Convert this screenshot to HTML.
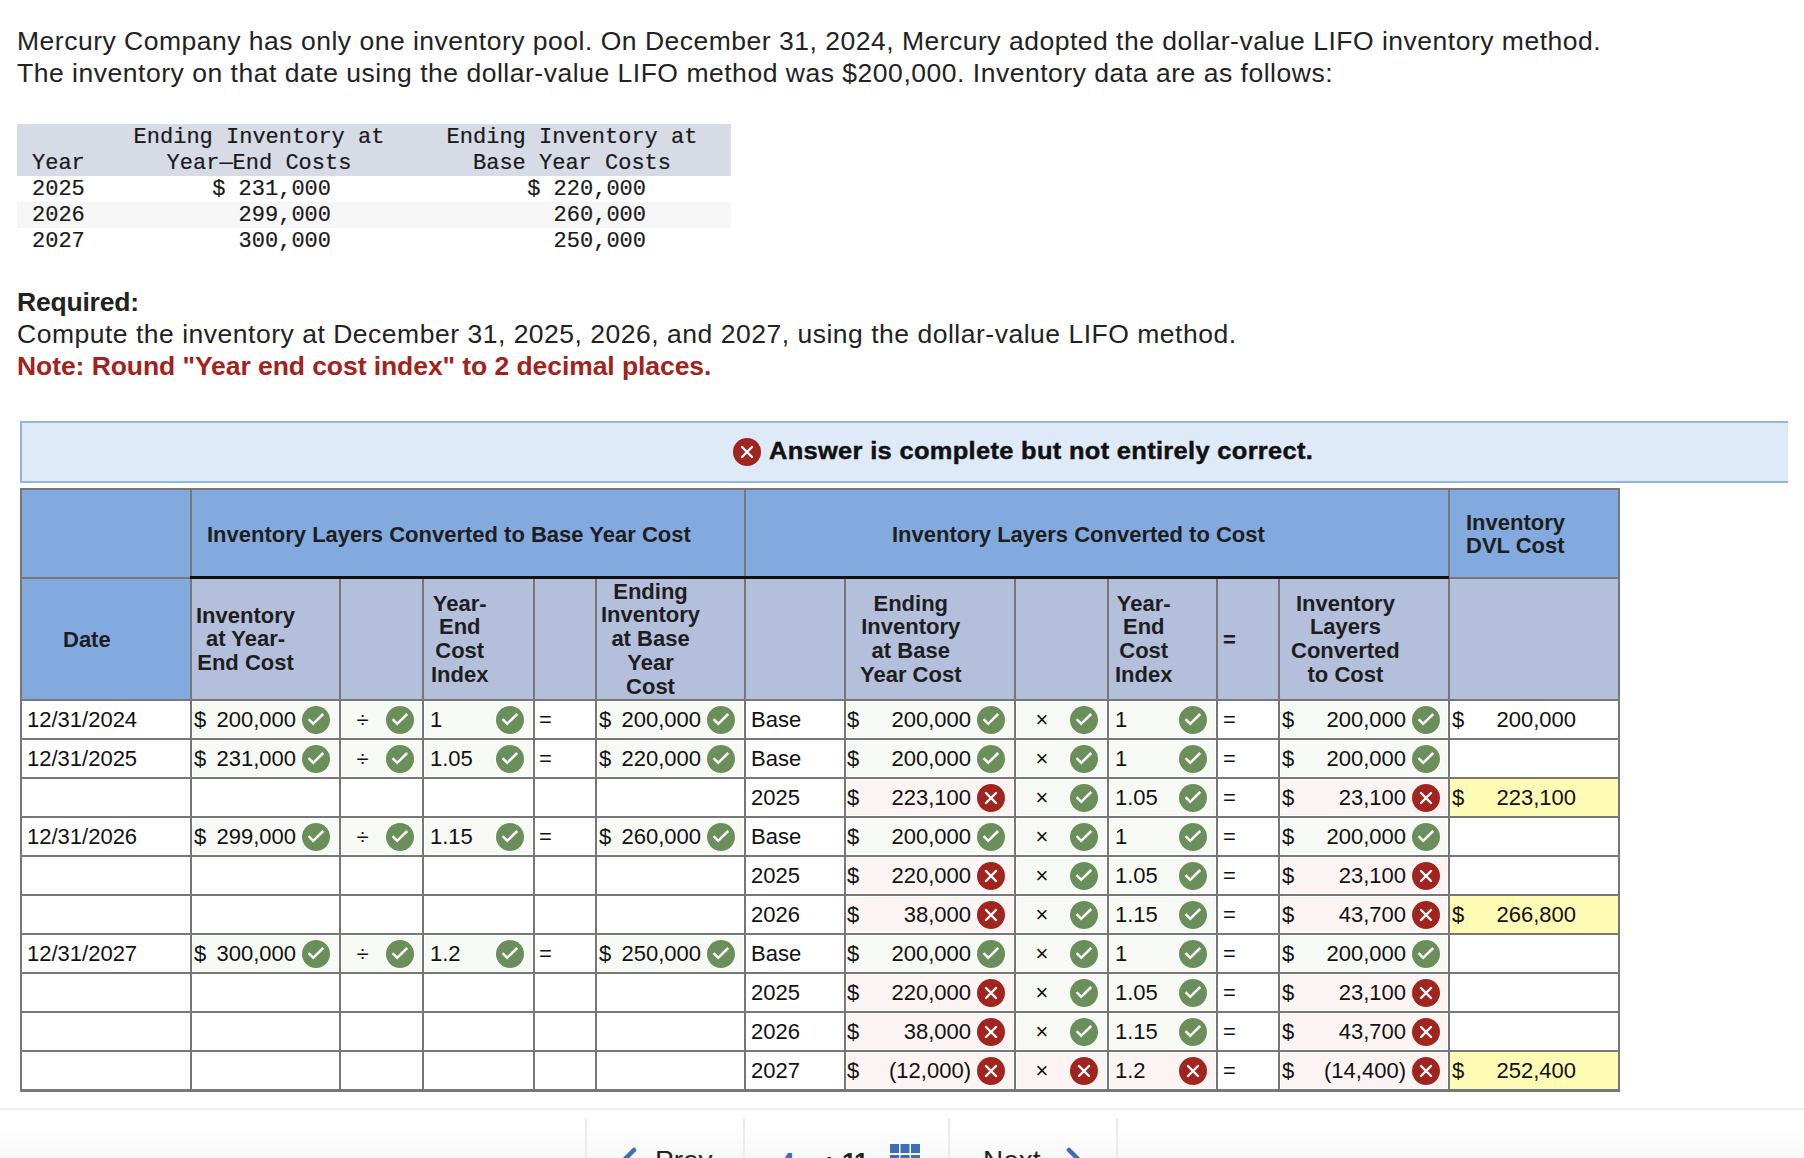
<!DOCTYPE html><html><head><meta charset="utf-8"><style>
html,body{margin:0;padding:0;background:#fff;width:1804px;height:1158px;overflow:hidden;position:relative}
*{box-sizing:border-box}
.a{position:absolute;white-space:pre}
.p{font-family:"Liberation Sans",sans-serif;font-size:26.5px;color:#222222;line-height:32px}
.m{font-family:"Liberation Mono",monospace;font-size:22px;color:#1a1a1a;line-height:26px;-webkit-text-stroke:0.2px #1a1a1a}
.t{font-family:"Liberation Sans",sans-serif;font-size:22px;color:#111111;line-height:24px}
.b{font-weight:bold}
.ln{position:absolute;background:#777777}
.ic{position:absolute;width:29px;height:29px}
</style></head><body>

<div class="a p" style="left:17px;top:25px;letter-spacing:0.5px">Mercury Company has only one inventory pool. On December 31, 2024, Mercury adopted the dollar-value LIFO inventory method.</div>
<div class="a p" style="left:17px;top:57px;letter-spacing:0.52px">The inventory on that date using the dollar-value LIFO method was $200,000. Inventory data are as follows:</div>
<div class="a" style="left:17px;top:124px;width:714px;height:52px;background:#d6dbe5"></div>
<div class="a" style="left:17px;top:202px;width:714px;height:26px;background:#f6f6f6"></div>
<div class="a m" style="left:32px;top:151px">Year</div>
<div class="a m" style="left:32px;top:177px">2025</div>
<div class="a m" style="left:32px;top:203px">2026</div>
<div class="a m" style="left:32px;top:229px">2027</div>
<div class="a m" style="left:259px;top:125px;width:0;display:flex;justify-content:center">Ending Inventory at</div>
<div class="a m" style="left:259px;top:151px;width:0;display:flex;justify-content:center">Year—End Costs</div>
<div class="a m" style="left:331px;top:177px;width:0;display:flex;justify-content:flex-end">$ 231,000</div>
<div class="a m" style="left:331px;top:203px;width:0;display:flex;justify-content:flex-end">299,000</div>
<div class="a m" style="left:331px;top:229px;width:0;display:flex;justify-content:flex-end">300,000</div>
<div class="a m" style="left:572px;top:125px;width:0;display:flex;justify-content:center">Ending Inventory at</div>
<div class="a m" style="left:572px;top:151px;width:0;display:flex;justify-content:center">Base Year Costs</div>
<div class="a m" style="left:646px;top:177px;width:0;display:flex;justify-content:flex-end">$ 220,000</div>
<div class="a m" style="left:646px;top:203px;width:0;display:flex;justify-content:flex-end">260,000</div>
<div class="a m" style="left:646px;top:229px;width:0;display:flex;justify-content:flex-end">250,000</div>
<div class="a p b" style="left:17px;top:286px;letter-spacing:-0.2px">Required:</div>
<div class="a p" style="left:17px;top:318px;letter-spacing:0.51px">Compute the inventory at December 31, 2025, 2026, and 2027, using the dollar-value LIFO method.</div>
<div class="a p b" style="left:17px;top:350px;color:#a3221c;letter-spacing:-0.07px">Note: Round "Year end cost index" to 2 decimal places.</div>
<div class="a" style="left:20px;top:421px;width:1768px;height:62px;background:#deeaf7;border-top:2px solid #93b2dc;border-bottom:2px solid #93b2dc;border-left:2px solid #93b2dc"></div>
<svg class="ic" style="left:731.9px;top:436.9px;width:30px;height:30px" viewBox="-1 -1 30 30"><circle cx="14" cy="14" r="15" fill="none"/><circle cx="14" cy="14" r="14" fill="#a2241e"/><path d="M9 9L19 19M19 9L9 19" stroke="#fff" stroke-width="2.4" stroke-linecap="round" fill="none"/></svg>
<div class="a t b" style="left:769px;top:439px;font-size:23px;letter-spacing:0.3px;color:#111;transform:scaleX(1.105);transform-origin:0 0;-webkit-text-stroke:0.45px #111">Answer is complete but not entirely correct.</div>
<div class="a" style="left:20px;top:488px;width:1600px;height:90px;background:#82aadf"></div>
<div class="a" style="left:20px;top:577px;width:1600px;height:123px;background:#b3bfdb"></div>
<div class="a" style="left:20px;top:577px;width:171px;height:123px;background:#82aadf"></div>
<div class="a t" style="left:27px;top:700px;line-height:39px;">12/31/2024</div>
<div class="a" style="left:193px;top:702px;width:145px;height:35px;background:#f7f9f4"></div>
<div class="a t" style="left:194px;top:700px;line-height:39px;">$</div>
<div class="a t" style="left:296px;top:700px;line-height:39px;width:0;display:flex;justify-content:flex-end">200,000</div>
<svg class="ic" style="left:301.3px;top:704.5px;width:30px;height:30px" viewBox="-1 -1 30 30"><circle cx="14" cy="14" r="15" fill="#fff"/><circle cx="14" cy="14" r="14" fill="#6a8f5a"/><path d="M6.6 13.2L11.2 17.8L21.2 8" stroke="#fff" stroke-width="2.5" fill="none"/></svg>
<div class="a" style="left:342px;top:702px;width:79px;height:35px;background:#f7f9f4"></div>
<div class="a t" style="left:362.5px;top:700px;line-height:39px;width:0;display:flex;justify-content:center">÷</div>
<svg class="ic" style="left:384.8px;top:704.5px;width:30px;height:30px" viewBox="-1 -1 30 30"><circle cx="14" cy="14" r="15" fill="#fff"/><circle cx="14" cy="14" r="14" fill="#6a8f5a"/><path d="M6.6 13.2L11.2 17.8L21.2 8" stroke="#fff" stroke-width="2.5" fill="none"/></svg>
<div class="a" style="left:425px;top:702px;width:107px;height:35px;background:#f7f9f4"></div>
<div class="a t" style="left:430px;top:700px;line-height:39px;">1</div>
<svg class="ic" style="left:494.9px;top:704.5px;width:30px;height:30px" viewBox="-1 -1 30 30"><circle cx="14" cy="14" r="15" fill="#fff"/><circle cx="14" cy="14" r="14" fill="#6a8f5a"/><path d="M6.6 13.2L11.2 17.8L21.2 8" stroke="#fff" stroke-width="2.5" fill="none"/></svg>
<div class="a t" style="left:539px;top:700px;line-height:39px;">=</div>
<div class="a" style="left:598px;top:702px;width:145px;height:35px;background:#f7f9f4"></div>
<div class="a t" style="left:599px;top:700px;line-height:39px;">$</div>
<div class="a t" style="left:701px;top:700px;line-height:39px;width:0;display:flex;justify-content:flex-end">200,000</div>
<svg class="ic" style="left:705.9px;top:704.5px;width:30px;height:30px" viewBox="-1 -1 30 30"><circle cx="14" cy="14" r="15" fill="#fff"/><circle cx="14" cy="14" r="14" fill="#6a8f5a"/><path d="M6.6 13.2L11.2 17.8L21.2 8" stroke="#fff" stroke-width="2.5" fill="none"/></svg>
<div class="a t" style="left:751px;top:700px;line-height:39px;">Base</div>
<div class="a" style="left:847px;top:702px;width:166px;height:35px;background:#f7f9f4"></div>
<div class="a t" style="left:847px;top:700px;line-height:39px;">$</div>
<div class="a t" style="left:971px;top:700px;line-height:39px;width:0;display:flex;justify-content:flex-end">200,000</div>
<svg class="ic" style="left:975.9px;top:704.5px;width:30px;height:30px" viewBox="-1 -1 30 30"><circle cx="14" cy="14" r="15" fill="#fff"/><circle cx="14" cy="14" r="14" fill="#6a8f5a"/><path d="M6.6 13.2L11.2 17.8L21.2 8" stroke="#fff" stroke-width="2.5" fill="none"/></svg>
<div class="a" style="left:1017px;top:702px;width:89px;height:35px;background:#f7f9f4"></div>
<div class="a t" style="left:1042px;top:700px;line-height:39px;width:0;display:flex;justify-content:center">×</div>
<svg class="ic" style="left:1069.2px;top:704.5px;width:30px;height:30px" viewBox="-1 -1 30 30"><circle cx="14" cy="14" r="15" fill="#fff"/><circle cx="14" cy="14" r="14" fill="#6a8f5a"/><path d="M6.6 13.2L11.2 17.8L21.2 8" stroke="#fff" stroke-width="2.5" fill="none"/></svg>
<div class="a" style="left:1110px;top:702px;width:105px;height:35px;background:#f7f9f4"></div>
<div class="a t" style="left:1115px;top:700px;line-height:39px;">1</div>
<svg class="ic" style="left:1178.0px;top:704.5px;width:30px;height:30px" viewBox="-1 -1 30 30"><circle cx="14" cy="14" r="15" fill="#fff"/><circle cx="14" cy="14" r="14" fill="#6a8f5a"/><path d="M6.6 13.2L11.2 17.8L21.2 8" stroke="#fff" stroke-width="2.5" fill="none"/></svg>
<div class="a t" style="left:1223px;top:700px;line-height:39px;">=</div>
<div class="a" style="left:1281px;top:702px;width:166px;height:35px;background:#f7f9f4"></div>
<div class="a t" style="left:1282px;top:700px;line-height:39px;">$</div>
<div class="a t" style="left:1406px;top:700px;line-height:39px;width:0;display:flex;justify-content:flex-end">200,000</div>
<svg class="ic" style="left:1410.8px;top:704.5px;width:30px;height:30px" viewBox="-1 -1 30 30"><circle cx="14" cy="14" r="15" fill="#fff"/><circle cx="14" cy="14" r="14" fill="#6a8f5a"/><path d="M6.6 13.2L11.2 17.8L21.2 8" stroke="#fff" stroke-width="2.5" fill="none"/></svg>
<div class="a t" style="left:1452px;top:700px;line-height:39px;">$</div>
<div class="a t" style="left:1576px;top:700px;line-height:39px;width:0;display:flex;justify-content:flex-end">200,000</div>
<div class="a t" style="left:27px;top:739px;line-height:39px;">12/31/2025</div>
<div class="a" style="left:193px;top:741px;width:145px;height:35px;background:#f7f9f4"></div>
<div class="a t" style="left:194px;top:739px;line-height:39px;">$</div>
<div class="a t" style="left:296px;top:739px;line-height:39px;width:0;display:flex;justify-content:flex-end">231,000</div>
<svg class="ic" style="left:301.3px;top:743.5px;width:30px;height:30px" viewBox="-1 -1 30 30"><circle cx="14" cy="14" r="15" fill="#fff"/><circle cx="14" cy="14" r="14" fill="#6a8f5a"/><path d="M6.6 13.2L11.2 17.8L21.2 8" stroke="#fff" stroke-width="2.5" fill="none"/></svg>
<div class="a" style="left:342px;top:741px;width:79px;height:35px;background:#f7f9f4"></div>
<div class="a t" style="left:362.5px;top:739px;line-height:39px;width:0;display:flex;justify-content:center">÷</div>
<svg class="ic" style="left:384.8px;top:743.5px;width:30px;height:30px" viewBox="-1 -1 30 30"><circle cx="14" cy="14" r="15" fill="#fff"/><circle cx="14" cy="14" r="14" fill="#6a8f5a"/><path d="M6.6 13.2L11.2 17.8L21.2 8" stroke="#fff" stroke-width="2.5" fill="none"/></svg>
<div class="a" style="left:425px;top:741px;width:107px;height:35px;background:#f7f9f4"></div>
<div class="a t" style="left:430px;top:739px;line-height:39px;">1.05</div>
<svg class="ic" style="left:494.9px;top:743.5px;width:30px;height:30px" viewBox="-1 -1 30 30"><circle cx="14" cy="14" r="15" fill="#fff"/><circle cx="14" cy="14" r="14" fill="#6a8f5a"/><path d="M6.6 13.2L11.2 17.8L21.2 8" stroke="#fff" stroke-width="2.5" fill="none"/></svg>
<div class="a t" style="left:539px;top:739px;line-height:39px;">=</div>
<div class="a" style="left:598px;top:741px;width:145px;height:35px;background:#f7f9f4"></div>
<div class="a t" style="left:599px;top:739px;line-height:39px;">$</div>
<div class="a t" style="left:701px;top:739px;line-height:39px;width:0;display:flex;justify-content:flex-end">220,000</div>
<svg class="ic" style="left:705.9px;top:743.5px;width:30px;height:30px" viewBox="-1 -1 30 30"><circle cx="14" cy="14" r="15" fill="#fff"/><circle cx="14" cy="14" r="14" fill="#6a8f5a"/><path d="M6.6 13.2L11.2 17.8L21.2 8" stroke="#fff" stroke-width="2.5" fill="none"/></svg>
<div class="a t" style="left:751px;top:739px;line-height:39px;">Base</div>
<div class="a" style="left:847px;top:741px;width:166px;height:35px;background:#f7f9f4"></div>
<div class="a t" style="left:847px;top:739px;line-height:39px;">$</div>
<div class="a t" style="left:971px;top:739px;line-height:39px;width:0;display:flex;justify-content:flex-end">200,000</div>
<svg class="ic" style="left:975.9px;top:743.5px;width:30px;height:30px" viewBox="-1 -1 30 30"><circle cx="14" cy="14" r="15" fill="#fff"/><circle cx="14" cy="14" r="14" fill="#6a8f5a"/><path d="M6.6 13.2L11.2 17.8L21.2 8" stroke="#fff" stroke-width="2.5" fill="none"/></svg>
<div class="a" style="left:1017px;top:741px;width:89px;height:35px;background:#f7f9f4"></div>
<div class="a t" style="left:1042px;top:739px;line-height:39px;width:0;display:flex;justify-content:center">×</div>
<svg class="ic" style="left:1069.2px;top:743.5px;width:30px;height:30px" viewBox="-1 -1 30 30"><circle cx="14" cy="14" r="15" fill="#fff"/><circle cx="14" cy="14" r="14" fill="#6a8f5a"/><path d="M6.6 13.2L11.2 17.8L21.2 8" stroke="#fff" stroke-width="2.5" fill="none"/></svg>
<div class="a" style="left:1110px;top:741px;width:105px;height:35px;background:#f7f9f4"></div>
<div class="a t" style="left:1115px;top:739px;line-height:39px;">1</div>
<svg class="ic" style="left:1178.0px;top:743.5px;width:30px;height:30px" viewBox="-1 -1 30 30"><circle cx="14" cy="14" r="15" fill="#fff"/><circle cx="14" cy="14" r="14" fill="#6a8f5a"/><path d="M6.6 13.2L11.2 17.8L21.2 8" stroke="#fff" stroke-width="2.5" fill="none"/></svg>
<div class="a t" style="left:1223px;top:739px;line-height:39px;">=</div>
<div class="a" style="left:1281px;top:741px;width:166px;height:35px;background:#f7f9f4"></div>
<div class="a t" style="left:1282px;top:739px;line-height:39px;">$</div>
<div class="a t" style="left:1406px;top:739px;line-height:39px;width:0;display:flex;justify-content:flex-end">200,000</div>
<svg class="ic" style="left:1410.8px;top:743.5px;width:30px;height:30px" viewBox="-1 -1 30 30"><circle cx="14" cy="14" r="15" fill="#fff"/><circle cx="14" cy="14" r="14" fill="#6a8f5a"/><path d="M6.6 13.2L11.2 17.8L21.2 8" stroke="#fff" stroke-width="2.5" fill="none"/></svg>
<div class="a t" style="left:751px;top:778px;line-height:39px;">2025</div>
<div class="a" style="left:847px;top:780px;width:166px;height:35px;background:#fcf3f3"></div>
<div class="a t" style="left:847px;top:778px;line-height:39px;">$</div>
<div class="a t" style="left:971px;top:778px;line-height:39px;width:0;display:flex;justify-content:flex-end">223,100</div>
<svg class="ic" style="left:975.9px;top:782.5px;width:30px;height:30px" viewBox="-1 -1 30 30"><circle cx="14" cy="14" r="15" fill="#fff"/><circle cx="14" cy="14" r="14" fill="#a2241e"/><path d="M9 9L19 19M19 9L9 19" stroke="#fff" stroke-width="2.4" stroke-linecap="round" fill="none"/></svg>
<div class="a" style="left:1017px;top:780px;width:89px;height:35px;background:#f7f9f4"></div>
<div class="a t" style="left:1042px;top:778px;line-height:39px;width:0;display:flex;justify-content:center">×</div>
<svg class="ic" style="left:1069.2px;top:782.5px;width:30px;height:30px" viewBox="-1 -1 30 30"><circle cx="14" cy="14" r="15" fill="#fff"/><circle cx="14" cy="14" r="14" fill="#6a8f5a"/><path d="M6.6 13.2L11.2 17.8L21.2 8" stroke="#fff" stroke-width="2.5" fill="none"/></svg>
<div class="a" style="left:1110px;top:780px;width:105px;height:35px;background:#f7f9f4"></div>
<div class="a t" style="left:1115px;top:778px;line-height:39px;">1.05</div>
<svg class="ic" style="left:1178.0px;top:782.5px;width:30px;height:30px" viewBox="-1 -1 30 30"><circle cx="14" cy="14" r="15" fill="#fff"/><circle cx="14" cy="14" r="14" fill="#6a8f5a"/><path d="M6.6 13.2L11.2 17.8L21.2 8" stroke="#fff" stroke-width="2.5" fill="none"/></svg>
<div class="a t" style="left:1223px;top:778px;line-height:39px;">=</div>
<div class="a" style="left:1281px;top:780px;width:166px;height:35px;background:#fcf3f3"></div>
<div class="a t" style="left:1282px;top:778px;line-height:39px;">$</div>
<div class="a t" style="left:1406px;top:778px;line-height:39px;width:0;display:flex;justify-content:flex-end">23,100</div>
<svg class="ic" style="left:1410.8px;top:782.5px;width:30px;height:30px" viewBox="-1 -1 30 30"><circle cx="14" cy="14" r="15" fill="#fff"/><circle cx="14" cy="14" r="14" fill="#a2241e"/><path d="M9 9L19 19M19 9L9 19" stroke="#fff" stroke-width="2.4" stroke-linecap="round" fill="none"/></svg>
<div class="a" style="left:1450px;top:779px;width:168px;height:37px;background:#fefbb5"></div>
<div class="a t" style="left:1452px;top:778px;line-height:39px;">$</div>
<div class="a t" style="left:1576px;top:778px;line-height:39px;width:0;display:flex;justify-content:flex-end">223,100</div>
<div class="a t" style="left:27px;top:817px;line-height:39px;">12/31/2026</div>
<div class="a" style="left:193px;top:819px;width:145px;height:35px;background:#f7f9f4"></div>
<div class="a t" style="left:194px;top:817px;line-height:39px;">$</div>
<div class="a t" style="left:296px;top:817px;line-height:39px;width:0;display:flex;justify-content:flex-end">299,000</div>
<svg class="ic" style="left:301.3px;top:821.5px;width:30px;height:30px" viewBox="-1 -1 30 30"><circle cx="14" cy="14" r="15" fill="#fff"/><circle cx="14" cy="14" r="14" fill="#6a8f5a"/><path d="M6.6 13.2L11.2 17.8L21.2 8" stroke="#fff" stroke-width="2.5" fill="none"/></svg>
<div class="a" style="left:342px;top:819px;width:79px;height:35px;background:#f7f9f4"></div>
<div class="a t" style="left:362.5px;top:817px;line-height:39px;width:0;display:flex;justify-content:center">÷</div>
<svg class="ic" style="left:384.8px;top:821.5px;width:30px;height:30px" viewBox="-1 -1 30 30"><circle cx="14" cy="14" r="15" fill="#fff"/><circle cx="14" cy="14" r="14" fill="#6a8f5a"/><path d="M6.6 13.2L11.2 17.8L21.2 8" stroke="#fff" stroke-width="2.5" fill="none"/></svg>
<div class="a" style="left:425px;top:819px;width:107px;height:35px;background:#f7f9f4"></div>
<div class="a t" style="left:430px;top:817px;line-height:39px;">1.15</div>
<svg class="ic" style="left:494.9px;top:821.5px;width:30px;height:30px" viewBox="-1 -1 30 30"><circle cx="14" cy="14" r="15" fill="#fff"/><circle cx="14" cy="14" r="14" fill="#6a8f5a"/><path d="M6.6 13.2L11.2 17.8L21.2 8" stroke="#fff" stroke-width="2.5" fill="none"/></svg>
<div class="a t" style="left:539px;top:817px;line-height:39px;">=</div>
<div class="a" style="left:598px;top:819px;width:145px;height:35px;background:#f7f9f4"></div>
<div class="a t" style="left:599px;top:817px;line-height:39px;">$</div>
<div class="a t" style="left:701px;top:817px;line-height:39px;width:0;display:flex;justify-content:flex-end">260,000</div>
<svg class="ic" style="left:705.9px;top:821.5px;width:30px;height:30px" viewBox="-1 -1 30 30"><circle cx="14" cy="14" r="15" fill="#fff"/><circle cx="14" cy="14" r="14" fill="#6a8f5a"/><path d="M6.6 13.2L11.2 17.8L21.2 8" stroke="#fff" stroke-width="2.5" fill="none"/></svg>
<div class="a t" style="left:751px;top:817px;line-height:39px;">Base</div>
<div class="a" style="left:847px;top:819px;width:166px;height:35px;background:#f7f9f4"></div>
<div class="a t" style="left:847px;top:817px;line-height:39px;">$</div>
<div class="a t" style="left:971px;top:817px;line-height:39px;width:0;display:flex;justify-content:flex-end">200,000</div>
<svg class="ic" style="left:975.9px;top:821.5px;width:30px;height:30px" viewBox="-1 -1 30 30"><circle cx="14" cy="14" r="15" fill="#fff"/><circle cx="14" cy="14" r="14" fill="#6a8f5a"/><path d="M6.6 13.2L11.2 17.8L21.2 8" stroke="#fff" stroke-width="2.5" fill="none"/></svg>
<div class="a" style="left:1017px;top:819px;width:89px;height:35px;background:#f7f9f4"></div>
<div class="a t" style="left:1042px;top:817px;line-height:39px;width:0;display:flex;justify-content:center">×</div>
<svg class="ic" style="left:1069.2px;top:821.5px;width:30px;height:30px" viewBox="-1 -1 30 30"><circle cx="14" cy="14" r="15" fill="#fff"/><circle cx="14" cy="14" r="14" fill="#6a8f5a"/><path d="M6.6 13.2L11.2 17.8L21.2 8" stroke="#fff" stroke-width="2.5" fill="none"/></svg>
<div class="a" style="left:1110px;top:819px;width:105px;height:35px;background:#f7f9f4"></div>
<div class="a t" style="left:1115px;top:817px;line-height:39px;">1</div>
<svg class="ic" style="left:1178.0px;top:821.5px;width:30px;height:30px" viewBox="-1 -1 30 30"><circle cx="14" cy="14" r="15" fill="#fff"/><circle cx="14" cy="14" r="14" fill="#6a8f5a"/><path d="M6.6 13.2L11.2 17.8L21.2 8" stroke="#fff" stroke-width="2.5" fill="none"/></svg>
<div class="a t" style="left:1223px;top:817px;line-height:39px;">=</div>
<div class="a" style="left:1281px;top:819px;width:166px;height:35px;background:#f7f9f4"></div>
<div class="a t" style="left:1282px;top:817px;line-height:39px;">$</div>
<div class="a t" style="left:1406px;top:817px;line-height:39px;width:0;display:flex;justify-content:flex-end">200,000</div>
<svg class="ic" style="left:1410.8px;top:821.5px;width:30px;height:30px" viewBox="-1 -1 30 30"><circle cx="14" cy="14" r="15" fill="#fff"/><circle cx="14" cy="14" r="14" fill="#6a8f5a"/><path d="M6.6 13.2L11.2 17.8L21.2 8" stroke="#fff" stroke-width="2.5" fill="none"/></svg>
<div class="a t" style="left:751px;top:856px;line-height:39px;">2025</div>
<div class="a" style="left:847px;top:858px;width:166px;height:35px;background:#fcf3f3"></div>
<div class="a t" style="left:847px;top:856px;line-height:39px;">$</div>
<div class="a t" style="left:971px;top:856px;line-height:39px;width:0;display:flex;justify-content:flex-end">220,000</div>
<svg class="ic" style="left:975.9px;top:860.5px;width:30px;height:30px" viewBox="-1 -1 30 30"><circle cx="14" cy="14" r="15" fill="#fff"/><circle cx="14" cy="14" r="14" fill="#a2241e"/><path d="M9 9L19 19M19 9L9 19" stroke="#fff" stroke-width="2.4" stroke-linecap="round" fill="none"/></svg>
<div class="a" style="left:1017px;top:858px;width:89px;height:35px;background:#f7f9f4"></div>
<div class="a t" style="left:1042px;top:856px;line-height:39px;width:0;display:flex;justify-content:center">×</div>
<svg class="ic" style="left:1069.2px;top:860.5px;width:30px;height:30px" viewBox="-1 -1 30 30"><circle cx="14" cy="14" r="15" fill="#fff"/><circle cx="14" cy="14" r="14" fill="#6a8f5a"/><path d="M6.6 13.2L11.2 17.8L21.2 8" stroke="#fff" stroke-width="2.5" fill="none"/></svg>
<div class="a" style="left:1110px;top:858px;width:105px;height:35px;background:#f7f9f4"></div>
<div class="a t" style="left:1115px;top:856px;line-height:39px;">1.05</div>
<svg class="ic" style="left:1178.0px;top:860.5px;width:30px;height:30px" viewBox="-1 -1 30 30"><circle cx="14" cy="14" r="15" fill="#fff"/><circle cx="14" cy="14" r="14" fill="#6a8f5a"/><path d="M6.6 13.2L11.2 17.8L21.2 8" stroke="#fff" stroke-width="2.5" fill="none"/></svg>
<div class="a t" style="left:1223px;top:856px;line-height:39px;">=</div>
<div class="a" style="left:1281px;top:858px;width:166px;height:35px;background:#fcf3f3"></div>
<div class="a t" style="left:1282px;top:856px;line-height:39px;">$</div>
<div class="a t" style="left:1406px;top:856px;line-height:39px;width:0;display:flex;justify-content:flex-end">23,100</div>
<svg class="ic" style="left:1410.8px;top:860.5px;width:30px;height:30px" viewBox="-1 -1 30 30"><circle cx="14" cy="14" r="15" fill="#fff"/><circle cx="14" cy="14" r="14" fill="#a2241e"/><path d="M9 9L19 19M19 9L9 19" stroke="#fff" stroke-width="2.4" stroke-linecap="round" fill="none"/></svg>
<div class="a t" style="left:751px;top:895px;line-height:39px;">2026</div>
<div class="a" style="left:847px;top:897px;width:166px;height:35px;background:#fcf3f3"></div>
<div class="a t" style="left:847px;top:895px;line-height:39px;">$</div>
<div class="a t" style="left:971px;top:895px;line-height:39px;width:0;display:flex;justify-content:flex-end">38,000</div>
<svg class="ic" style="left:975.9px;top:899.5px;width:30px;height:30px" viewBox="-1 -1 30 30"><circle cx="14" cy="14" r="15" fill="#fff"/><circle cx="14" cy="14" r="14" fill="#a2241e"/><path d="M9 9L19 19M19 9L9 19" stroke="#fff" stroke-width="2.4" stroke-linecap="round" fill="none"/></svg>
<div class="a" style="left:1017px;top:897px;width:89px;height:35px;background:#f7f9f4"></div>
<div class="a t" style="left:1042px;top:895px;line-height:39px;width:0;display:flex;justify-content:center">×</div>
<svg class="ic" style="left:1069.2px;top:899.5px;width:30px;height:30px" viewBox="-1 -1 30 30"><circle cx="14" cy="14" r="15" fill="#fff"/><circle cx="14" cy="14" r="14" fill="#6a8f5a"/><path d="M6.6 13.2L11.2 17.8L21.2 8" stroke="#fff" stroke-width="2.5" fill="none"/></svg>
<div class="a" style="left:1110px;top:897px;width:105px;height:35px;background:#f7f9f4"></div>
<div class="a t" style="left:1115px;top:895px;line-height:39px;">1.15</div>
<svg class="ic" style="left:1178.0px;top:899.5px;width:30px;height:30px" viewBox="-1 -1 30 30"><circle cx="14" cy="14" r="15" fill="#fff"/><circle cx="14" cy="14" r="14" fill="#6a8f5a"/><path d="M6.6 13.2L11.2 17.8L21.2 8" stroke="#fff" stroke-width="2.5" fill="none"/></svg>
<div class="a t" style="left:1223px;top:895px;line-height:39px;">=</div>
<div class="a" style="left:1281px;top:897px;width:166px;height:35px;background:#fcf3f3"></div>
<div class="a t" style="left:1282px;top:895px;line-height:39px;">$</div>
<div class="a t" style="left:1406px;top:895px;line-height:39px;width:0;display:flex;justify-content:flex-end">43,700</div>
<svg class="ic" style="left:1410.8px;top:899.5px;width:30px;height:30px" viewBox="-1 -1 30 30"><circle cx="14" cy="14" r="15" fill="#fff"/><circle cx="14" cy="14" r="14" fill="#a2241e"/><path d="M9 9L19 19M19 9L9 19" stroke="#fff" stroke-width="2.4" stroke-linecap="round" fill="none"/></svg>
<div class="a" style="left:1450px;top:896px;width:168px;height:37px;background:#fefbb5"></div>
<div class="a t" style="left:1452px;top:895px;line-height:39px;">$</div>
<div class="a t" style="left:1576px;top:895px;line-height:39px;width:0;display:flex;justify-content:flex-end">266,800</div>
<div class="a t" style="left:27px;top:934px;line-height:39px;">12/31/2027</div>
<div class="a" style="left:193px;top:936px;width:145px;height:35px;background:#f7f9f4"></div>
<div class="a t" style="left:194px;top:934px;line-height:39px;">$</div>
<div class="a t" style="left:296px;top:934px;line-height:39px;width:0;display:flex;justify-content:flex-end">300,000</div>
<svg class="ic" style="left:301.3px;top:938.5px;width:30px;height:30px" viewBox="-1 -1 30 30"><circle cx="14" cy="14" r="15" fill="#fff"/><circle cx="14" cy="14" r="14" fill="#6a8f5a"/><path d="M6.6 13.2L11.2 17.8L21.2 8" stroke="#fff" stroke-width="2.5" fill="none"/></svg>
<div class="a" style="left:342px;top:936px;width:79px;height:35px;background:#f7f9f4"></div>
<div class="a t" style="left:362.5px;top:934px;line-height:39px;width:0;display:flex;justify-content:center">÷</div>
<svg class="ic" style="left:384.8px;top:938.5px;width:30px;height:30px" viewBox="-1 -1 30 30"><circle cx="14" cy="14" r="15" fill="#fff"/><circle cx="14" cy="14" r="14" fill="#6a8f5a"/><path d="M6.6 13.2L11.2 17.8L21.2 8" stroke="#fff" stroke-width="2.5" fill="none"/></svg>
<div class="a" style="left:425px;top:936px;width:107px;height:35px;background:#f7f9f4"></div>
<div class="a t" style="left:430px;top:934px;line-height:39px;">1.2</div>
<svg class="ic" style="left:494.9px;top:938.5px;width:30px;height:30px" viewBox="-1 -1 30 30"><circle cx="14" cy="14" r="15" fill="#fff"/><circle cx="14" cy="14" r="14" fill="#6a8f5a"/><path d="M6.6 13.2L11.2 17.8L21.2 8" stroke="#fff" stroke-width="2.5" fill="none"/></svg>
<div class="a t" style="left:539px;top:934px;line-height:39px;">=</div>
<div class="a" style="left:598px;top:936px;width:145px;height:35px;background:#f7f9f4"></div>
<div class="a t" style="left:599px;top:934px;line-height:39px;">$</div>
<div class="a t" style="left:701px;top:934px;line-height:39px;width:0;display:flex;justify-content:flex-end">250,000</div>
<svg class="ic" style="left:705.9px;top:938.5px;width:30px;height:30px" viewBox="-1 -1 30 30"><circle cx="14" cy="14" r="15" fill="#fff"/><circle cx="14" cy="14" r="14" fill="#6a8f5a"/><path d="M6.6 13.2L11.2 17.8L21.2 8" stroke="#fff" stroke-width="2.5" fill="none"/></svg>
<div class="a t" style="left:751px;top:934px;line-height:39px;">Base</div>
<div class="a" style="left:847px;top:936px;width:166px;height:35px;background:#f7f9f4"></div>
<div class="a t" style="left:847px;top:934px;line-height:39px;">$</div>
<div class="a t" style="left:971px;top:934px;line-height:39px;width:0;display:flex;justify-content:flex-end">200,000</div>
<svg class="ic" style="left:975.9px;top:938.5px;width:30px;height:30px" viewBox="-1 -1 30 30"><circle cx="14" cy="14" r="15" fill="#fff"/><circle cx="14" cy="14" r="14" fill="#6a8f5a"/><path d="M6.6 13.2L11.2 17.8L21.2 8" stroke="#fff" stroke-width="2.5" fill="none"/></svg>
<div class="a" style="left:1017px;top:936px;width:89px;height:35px;background:#f7f9f4"></div>
<div class="a t" style="left:1042px;top:934px;line-height:39px;width:0;display:flex;justify-content:center">×</div>
<svg class="ic" style="left:1069.2px;top:938.5px;width:30px;height:30px" viewBox="-1 -1 30 30"><circle cx="14" cy="14" r="15" fill="#fff"/><circle cx="14" cy="14" r="14" fill="#6a8f5a"/><path d="M6.6 13.2L11.2 17.8L21.2 8" stroke="#fff" stroke-width="2.5" fill="none"/></svg>
<div class="a" style="left:1110px;top:936px;width:105px;height:35px;background:#f7f9f4"></div>
<div class="a t" style="left:1115px;top:934px;line-height:39px;">1</div>
<svg class="ic" style="left:1178.0px;top:938.5px;width:30px;height:30px" viewBox="-1 -1 30 30"><circle cx="14" cy="14" r="15" fill="#fff"/><circle cx="14" cy="14" r="14" fill="#6a8f5a"/><path d="M6.6 13.2L11.2 17.8L21.2 8" stroke="#fff" stroke-width="2.5" fill="none"/></svg>
<div class="a t" style="left:1223px;top:934px;line-height:39px;">=</div>
<div class="a" style="left:1281px;top:936px;width:166px;height:35px;background:#f7f9f4"></div>
<div class="a t" style="left:1282px;top:934px;line-height:39px;">$</div>
<div class="a t" style="left:1406px;top:934px;line-height:39px;width:0;display:flex;justify-content:flex-end">200,000</div>
<svg class="ic" style="left:1410.8px;top:938.5px;width:30px;height:30px" viewBox="-1 -1 30 30"><circle cx="14" cy="14" r="15" fill="#fff"/><circle cx="14" cy="14" r="14" fill="#6a8f5a"/><path d="M6.6 13.2L11.2 17.8L21.2 8" stroke="#fff" stroke-width="2.5" fill="none"/></svg>
<div class="a t" style="left:751px;top:973px;line-height:39px;">2025</div>
<div class="a" style="left:847px;top:975px;width:166px;height:35px;background:#fcf3f3"></div>
<div class="a t" style="left:847px;top:973px;line-height:39px;">$</div>
<div class="a t" style="left:971px;top:973px;line-height:39px;width:0;display:flex;justify-content:flex-end">220,000</div>
<svg class="ic" style="left:975.9px;top:977.5px;width:30px;height:30px" viewBox="-1 -1 30 30"><circle cx="14" cy="14" r="15" fill="#fff"/><circle cx="14" cy="14" r="14" fill="#a2241e"/><path d="M9 9L19 19M19 9L9 19" stroke="#fff" stroke-width="2.4" stroke-linecap="round" fill="none"/></svg>
<div class="a" style="left:1017px;top:975px;width:89px;height:35px;background:#f7f9f4"></div>
<div class="a t" style="left:1042px;top:973px;line-height:39px;width:0;display:flex;justify-content:center">×</div>
<svg class="ic" style="left:1069.2px;top:977.5px;width:30px;height:30px" viewBox="-1 -1 30 30"><circle cx="14" cy="14" r="15" fill="#fff"/><circle cx="14" cy="14" r="14" fill="#6a8f5a"/><path d="M6.6 13.2L11.2 17.8L21.2 8" stroke="#fff" stroke-width="2.5" fill="none"/></svg>
<div class="a" style="left:1110px;top:975px;width:105px;height:35px;background:#f7f9f4"></div>
<div class="a t" style="left:1115px;top:973px;line-height:39px;">1.05</div>
<svg class="ic" style="left:1178.0px;top:977.5px;width:30px;height:30px" viewBox="-1 -1 30 30"><circle cx="14" cy="14" r="15" fill="#fff"/><circle cx="14" cy="14" r="14" fill="#6a8f5a"/><path d="M6.6 13.2L11.2 17.8L21.2 8" stroke="#fff" stroke-width="2.5" fill="none"/></svg>
<div class="a t" style="left:1223px;top:973px;line-height:39px;">=</div>
<div class="a" style="left:1281px;top:975px;width:166px;height:35px;background:#fcf3f3"></div>
<div class="a t" style="left:1282px;top:973px;line-height:39px;">$</div>
<div class="a t" style="left:1406px;top:973px;line-height:39px;width:0;display:flex;justify-content:flex-end">23,100</div>
<svg class="ic" style="left:1410.8px;top:977.5px;width:30px;height:30px" viewBox="-1 -1 30 30"><circle cx="14" cy="14" r="15" fill="#fff"/><circle cx="14" cy="14" r="14" fill="#a2241e"/><path d="M9 9L19 19M19 9L9 19" stroke="#fff" stroke-width="2.4" stroke-linecap="round" fill="none"/></svg>
<div class="a t" style="left:751px;top:1012px;line-height:39px;">2026</div>
<div class="a" style="left:847px;top:1014px;width:166px;height:35px;background:#fcf3f3"></div>
<div class="a t" style="left:847px;top:1012px;line-height:39px;">$</div>
<div class="a t" style="left:971px;top:1012px;line-height:39px;width:0;display:flex;justify-content:flex-end">38,000</div>
<svg class="ic" style="left:975.9px;top:1016.5px;width:30px;height:30px" viewBox="-1 -1 30 30"><circle cx="14" cy="14" r="15" fill="#fff"/><circle cx="14" cy="14" r="14" fill="#a2241e"/><path d="M9 9L19 19M19 9L9 19" stroke="#fff" stroke-width="2.4" stroke-linecap="round" fill="none"/></svg>
<div class="a" style="left:1017px;top:1014px;width:89px;height:35px;background:#f7f9f4"></div>
<div class="a t" style="left:1042px;top:1012px;line-height:39px;width:0;display:flex;justify-content:center">×</div>
<svg class="ic" style="left:1069.2px;top:1016.5px;width:30px;height:30px" viewBox="-1 -1 30 30"><circle cx="14" cy="14" r="15" fill="#fff"/><circle cx="14" cy="14" r="14" fill="#6a8f5a"/><path d="M6.6 13.2L11.2 17.8L21.2 8" stroke="#fff" stroke-width="2.5" fill="none"/></svg>
<div class="a" style="left:1110px;top:1014px;width:105px;height:35px;background:#f7f9f4"></div>
<div class="a t" style="left:1115px;top:1012px;line-height:39px;">1.15</div>
<svg class="ic" style="left:1178.0px;top:1016.5px;width:30px;height:30px" viewBox="-1 -1 30 30"><circle cx="14" cy="14" r="15" fill="#fff"/><circle cx="14" cy="14" r="14" fill="#6a8f5a"/><path d="M6.6 13.2L11.2 17.8L21.2 8" stroke="#fff" stroke-width="2.5" fill="none"/></svg>
<div class="a t" style="left:1223px;top:1012px;line-height:39px;">=</div>
<div class="a" style="left:1281px;top:1014px;width:166px;height:35px;background:#fcf3f3"></div>
<div class="a t" style="left:1282px;top:1012px;line-height:39px;">$</div>
<div class="a t" style="left:1406px;top:1012px;line-height:39px;width:0;display:flex;justify-content:flex-end">43,700</div>
<svg class="ic" style="left:1410.8px;top:1016.5px;width:30px;height:30px" viewBox="-1 -1 30 30"><circle cx="14" cy="14" r="15" fill="#fff"/><circle cx="14" cy="14" r="14" fill="#a2241e"/><path d="M9 9L19 19M19 9L9 19" stroke="#fff" stroke-width="2.4" stroke-linecap="round" fill="none"/></svg>
<div class="a t" style="left:751px;top:1051px;line-height:39px;">2027</div>
<div class="a" style="left:847px;top:1053px;width:166px;height:35px;background:#fcf3f3"></div>
<div class="a t" style="left:847px;top:1051px;line-height:39px;">$</div>
<div class="a t" style="left:971px;top:1051px;line-height:39px;width:0;display:flex;justify-content:flex-end">(12,000)</div>
<svg class="ic" style="left:975.9px;top:1055.5px;width:30px;height:30px" viewBox="-1 -1 30 30"><circle cx="14" cy="14" r="15" fill="#fff"/><circle cx="14" cy="14" r="14" fill="#a2241e"/><path d="M9 9L19 19M19 9L9 19" stroke="#fff" stroke-width="2.4" stroke-linecap="round" fill="none"/></svg>
<div class="a" style="left:1017px;top:1053px;width:89px;height:35px;background:#fcf3f3"></div>
<div class="a t" style="left:1042px;top:1051px;line-height:39px;width:0;display:flex;justify-content:center">×</div>
<svg class="ic" style="left:1069.2px;top:1055.5px;width:30px;height:30px" viewBox="-1 -1 30 30"><circle cx="14" cy="14" r="15" fill="#fff"/><circle cx="14" cy="14" r="14" fill="#a2241e"/><path d="M9 9L19 19M19 9L9 19" stroke="#fff" stroke-width="2.4" stroke-linecap="round" fill="none"/></svg>
<div class="a" style="left:1110px;top:1053px;width:105px;height:35px;background:#fcf3f3"></div>
<div class="a t" style="left:1115px;top:1051px;line-height:39px;">1.2</div>
<svg class="ic" style="left:1178.0px;top:1055.5px;width:30px;height:30px" viewBox="-1 -1 30 30"><circle cx="14" cy="14" r="15" fill="#fff"/><circle cx="14" cy="14" r="14" fill="#a2241e"/><path d="M9 9L19 19M19 9L9 19" stroke="#fff" stroke-width="2.4" stroke-linecap="round" fill="none"/></svg>
<div class="a t" style="left:1223px;top:1051px;line-height:39px;">=</div>
<div class="a" style="left:1281px;top:1053px;width:166px;height:35px;background:#fcf3f3"></div>
<div class="a t" style="left:1282px;top:1051px;line-height:39px;">$</div>
<div class="a t" style="left:1406px;top:1051px;line-height:39px;width:0;display:flex;justify-content:flex-end">(14,400)</div>
<svg class="ic" style="left:1410.8px;top:1055.5px;width:30px;height:30px" viewBox="-1 -1 30 30"><circle cx="14" cy="14" r="15" fill="#fff"/><circle cx="14" cy="14" r="14" fill="#a2241e"/><path d="M9 9L19 19M19 9L9 19" stroke="#fff" stroke-width="2.4" stroke-linecap="round" fill="none"/></svg>
<div class="a" style="left:1450px;top:1052px;width:168px;height:37px;background:#fefbb5"></div>
<div class="a t" style="left:1452px;top:1051px;line-height:39px;">$</div>
<div class="a t" style="left:1576px;top:1051px;line-height:39px;width:0;display:flex;justify-content:flex-end">252,400</div>
<div class="a t b" style="left:207px;top:522.5px;line-height:23.8px;color:#1e1e1e;text-align:center;">Inventory Layers Converted to Base Year Cost</div>
<div class="a t b" style="left:892px;top:522.5px;line-height:23.8px;color:#1e1e1e;text-align:center;">Inventory Layers Converted to Cost</div>
<div class="a t b" style="left:1466px;top:510.5px;line-height:23.8px;color:#1e1e1e;text-align:left;">Inventory<br>DVL Cost</div>
<div class="a t b" style="left:63px;top:627.5px;line-height:23.8px;color:#1e1e1e;text-align:center;">Date</div>
<div class="a t b" style="left:196px;top:603.5px;line-height:23.8px;color:#1e1e1e;text-align:center;">Inventory<br>at Year-<br>End Cost</div>
<div class="a t b" style="left:431px;top:591.5px;line-height:23.8px;color:#1e1e1e;text-align:center;">Year-<br>End<br>Cost<br>Index</div>
<div class="a t b" style="left:601px;top:579.5px;line-height:23.8px;color:#1e1e1e;text-align:center;">Ending<br>Inventory<br>at Base<br>Year<br>Cost</div>
<div class="a t b" style="left:860px;top:591.5px;line-height:23.8px;color:#1e1e1e;text-align:center;">Ending<br>Inventory<br>at Base<br>Year Cost</div>
<div class="a t b" style="left:1115px;top:591.5px;line-height:23.8px;color:#1e1e1e;text-align:center;">Year-<br>End<br>Cost<br>Index</div>
<div class="a t b" style="left:1223px;top:627.5px;line-height:23.8px;color:#1e1e1e;text-align:center;">=</div>
<div class="a t b" style="left:1291px;top:591.5px;line-height:23.8px;color:#1e1e1e;text-align:center;">Inventory<br>Layers<br>Converted<br>to Cost</div>
<div class="ln" style="left:20px;top:488px;width:2px;height:603px"></div>
<div class="ln" style="left:190px;top:488px;width:2px;height:603px"></div>
<div class="ln" style="left:339px;top:577px;width:2px;height:514px"></div>
<div class="ln" style="left:422px;top:577px;width:2px;height:514px"></div>
<div class="ln" style="left:533px;top:577px;width:2px;height:514px"></div>
<div class="ln" style="left:595px;top:577px;width:2px;height:514px"></div>
<div class="ln" style="left:744px;top:488px;width:2px;height:603px"></div>
<div class="ln" style="left:844px;top:577px;width:2px;height:514px"></div>
<div class="ln" style="left:1014px;top:577px;width:2px;height:514px"></div>
<div class="ln" style="left:1107px;top:577px;width:2px;height:514px"></div>
<div class="ln" style="left:1216px;top:577px;width:2px;height:514px"></div>
<div class="ln" style="left:1278px;top:577px;width:2px;height:514px"></div>
<div class="ln" style="left:1448px;top:488px;width:2px;height:603px"></div>
<div class="ln" style="left:1618px;top:488px;width:2px;height:603px"></div>
<div class="ln" style="left:20px;top:488px;width:1600px;height:2px"></div>
<div class="ln" style="left:20px;top:577px;width:1600px;height:2px"></div>
<div class="ln" style="left:20px;top:699px;width:1600px;height:2px"></div>
<div class="ln" style="left:20px;top:738px;width:1600px;height:2px"></div>
<div class="ln" style="left:20px;top:777px;width:1600px;height:2px"></div>
<div class="ln" style="left:20px;top:816px;width:1600px;height:2px"></div>
<div class="ln" style="left:20px;top:855px;width:1600px;height:2px"></div>
<div class="ln" style="left:20px;top:894px;width:1600px;height:2px"></div>
<div class="ln" style="left:20px;top:933px;width:1600px;height:2px"></div>
<div class="ln" style="left:20px;top:972px;width:1600px;height:2px"></div>
<div class="ln" style="left:20px;top:1011px;width:1600px;height:2px"></div>
<div class="ln" style="left:20px;top:1050px;width:1600px;height:2px"></div>
<div class="ln" style="left:20px;top:1089px;width:1600px;height:2px"></div>
<div class="ln" style="left:190px;top:576px;width:1259px;height:3px;background:#111"></div>
<div class="ln" style="left:20px;top:1089px;width:1600px;height:3px"></div>
<div class="a" style="left:0;top:1108px;width:1804px;height:2px;background:#eeeeee"></div>
<div class="a" style="left:0;top:1110px;width:1804px;height:48px;background:linear-gradient(#ffffff 0%,#ffffff 35%,#f7f7f7 100%)"></div>
<div class="a" style="left:585px;top:1119px;width:2px;height:40px;background:#ebebeb"></div>
<div class="a" style="left:743px;top:1119px;width:2px;height:40px;background:#ebebeb"></div>
<div class="a" style="left:948px;top:1119px;width:2px;height:40px;background:#ebebeb"></div>
<div class="a" style="left:1116px;top:1119px;width:2px;height:40px;background:#ebebeb"></div>
<div class="a" style="left:655px;top:1145px;font-family:'Liberation Sans';font-size:28px;color:#222;line-height:32px">Prev</div>
<div class="a" style="left:811px;top:1150px;font-family:'Liberation Sans';font-size:24px;color:#222;line-height:32px">of</div>
<div class="a" style="left:842px;top:1146px;font-family:'Liberation Sans';font-size:26px;color:#222;font-weight:bold;letter-spacing:-1px;line-height:32px">11</div>
<div class="a" style="left:780px;top:1146px;font-family:'Liberation Sans';font-size:26px;color:#3c6eb4;font-weight:bold;line-height:32px">4</div>
<div class="a" style="left:983px;top:1145px;font-family:'Liberation Sans';font-size:28px;color:#222;line-height:32px">Next</div>
<svg class="a" style="left:615px;top:1143px" width="24" height="20"><path d="M19 7L9 17" stroke="#3c6eb4" stroke-width="4.5" stroke-linecap="round" fill="none"/></svg>
<svg class="a" style="left:1062px;top:1143px" width="24" height="20"><path d="M7 7L17 17" stroke="#3c6eb4" stroke-width="4.5" stroke-linecap="round" fill="none"/></svg>
<svg class="a" style="left:890px;top:1144px" width="30" height="20"><rect x="0" y="0" width="9" height="9" fill="#3c6eb4"/><rect x="10.5" y="0" width="9" height="9" fill="#3c6eb4"/><rect x="21" y="0" width="9" height="9" fill="#3c6eb4"/><rect x="0" y="11" width="9" height="9" fill="#3c6eb4"/><rect x="10.5" y="11" width="9" height="9" fill="#3c6eb4"/><rect x="21" y="11" width="9" height="9" fill="#3c6eb4"/></svg>
</body></html>
